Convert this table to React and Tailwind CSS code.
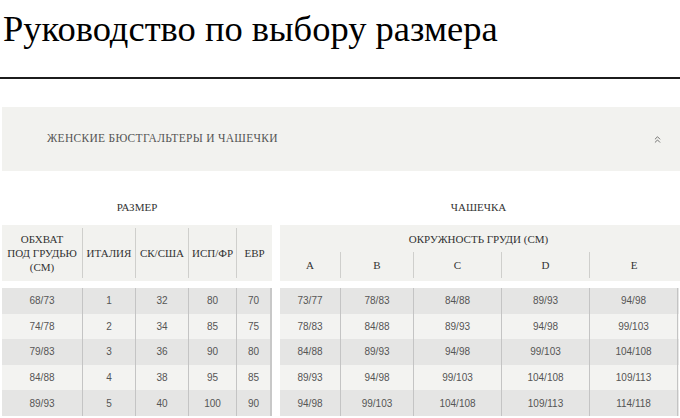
import React from "react";
import { ChevronsUp } from "lucide-react";

const sizeCols = [
  { label: ["ОБХВАТ", "ПОД ГРУДЬЮ", "(СМ)"], w: "w-[81px]" },
  { label: ["ИТАЛИЯ"], w: "w-[53px]" },
  { label: ["СК/США"], w: "w-[53px]" },
  { label: ["ИСП/ФР"], w: "w-[48px]" },
  { label: ["ЕВР"], w: "w-[35px]" },
];

const sizeRows = [
  ["68/73", "1", "32", "80", "70"],
  ["74/78", "2", "34", "85", "75"],
  ["79/83", "3", "36", "90", "80"],
  ["84/88", "4", "38", "95", "85"],
  ["89/93", "5", "40", "100", "90"],
];

const cupCols = [
  { label: "A", w: "w-[61px]" },
  { label: "B", w: "w-[73px]" },
  { label: "C", w: "w-[88px]" },
  { label: "D", w: "w-[88px]" },
  { label: "E", w: "w-[88px]" },
];

const cupRows = [
  ["73/77", "78/83", "84/88", "89/93", "94/98"],
  ["78/83", "84/88", "89/93", "94/98", "99/103"],
  ["84/88", "89/93", "94/98", "99/103", "104/108"],
  ["89/93", "94/98", "99/103", "104/108", "109/113"],
  ["94/98", "99/103", "104/108", "109/113", "114/118"],
];

function BodyRow({ cells, cols, idx, last }) {
  return (
    <div className={`flex h-[25.6px] ${idx % 2 === 0 ? "bg-[#e5e5e4]" : "bg-[#f3f3f1]"}`}>
      {cells.map((c, i) => (
        <div
          key={i}
          className={`${cols[i].w} flex items-center justify-center text-[10px] text-[#555] font-['Liberation_Sans',Arial,sans-serif] ${
            i < cells.length - 1 ? "border-r border-[#c4c4c4]" : last
          }`}
        >
          {c}
        </div>
      ))}
    </div>
  );
}

export default function App() {
  return (
    <div className="w-[680px] h-[418px] overflow-hidden bg-white font-['Liberation_Serif','Times_New_Roman',serif]">
      <h1 className="pl-[3px] pt-[9px] text-[36.5px] leading-[40px] font-normal text-black">
        Руководство по выбору размера
      </h1>
      <div className="mt-[28px] h-[2px] bg-[#1c1c1c]" />

      <div className="mt-[28px] ml-[2px] h-[64px] bg-[#f2f2ef] flex items-center justify-between pl-[45px] pr-[17px]">
        <span className="text-[11.5px] text-[#555] tracking-[0.3px]">
          ЖЕНСКИЕ БЮСТГАЛЬТЕРЫ И ЧАШЕЧКИ
        </span>
        <ChevronsUp size={11} strokeWidth={1.6} className="text-[#444]" />
      </div>

      <div className="mt-[29px] flex">
        {/* size table */}
        <div className="w-[272px] pl-[2px]">
          <div className="h-[14px] leading-[14px] text-[11px] text-[#333] text-center">РАЗМЕР</div>
          <div className="mt-[11px] h-[56px] bg-[#f2f2ef] flex">
            {sizeCols.map((c, i) => (
              <div key={i} className={`${c.w} flex items-center justify-center py-[3px]`}>
                <div
                  className={`w-full h-full flex flex-col items-center justify-center text-[11px] leading-[14px] text-[#333] text-center ${
                    i < sizeCols.length - 1 ? "border-r border-[#cfcfcc]" : ""
                  }`}
                >
                  {c.label.map((l) => (
                    <span key={l}>{l}</span>
                  ))}
                </div>
              </div>
            ))}
          </div>
          <div className="mt-[7px]">
            {sizeRows.map((r, i) => (
              <BodyRow key={i} cells={r} cols={sizeCols} idx={i} last="border-r-2 border-[#c8c8c8]" />
            ))}
          </div>
        </div>

        {/* cup table */}
        <div className="ml-[8px] w-[400px]">
          <div className="h-[14px] leading-[14px] text-[11px] text-[#333] text-center pr-[3px]">ЧАШЕЧКА</div>
          <div className="mt-[11px] h-[56px] bg-[#f2f2ef] flex flex-col">
            <div className="pt-[7px] h-[27px] leading-[14px] text-[11px] text-[#333] text-center pr-[3px]">
              ОКРУЖНОСТЬ ГРУДИ (СМ)
            </div>
            <div className="flex h-[26px]">
              {cupCols.map((c, i) => (
                <div
                  key={i}
                  className={`${c.w} flex items-center justify-center text-[11px] text-[#333] ${
                    i < cupCols.length - 1 ? "border-r border-[#cfcfcc]" : ""
                  }`}
                >
                  {c.label}
                </div>
              ))}
            </div>
          </div>
          <div className="mt-[7px] w-[399px]">
            {cupRows.map((r, i) => (
              <BodyRow key={i} cells={r} cols={cupCols} idx={i} last="border-r border-[#c4c4c4]" />
            ))}
          </div>
        </div>
      </div>
    </div>
  );
}
